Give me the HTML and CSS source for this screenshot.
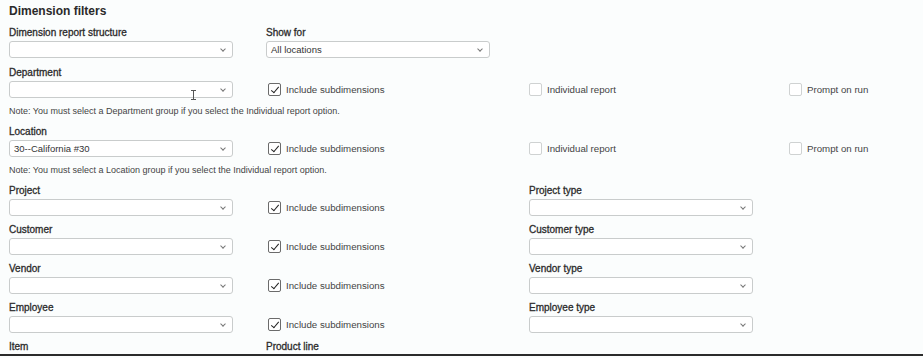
FILE: index.html
```html
<!DOCTYPE html>
<html lang="en">
<head>
    <meta charset="UTF-8">
    <meta name="viewport" content="width=device-width, initial-scale=1.0">
    <title>Dimension filters</title>
    <link rel="stylesheet" href="styles.css">
</head>
<body>
<div class="page">
    <h2 class="title">Dimension filters</h2>

    <div class="row first">
        <label class="lbl c1">Dimension report structure</label>
        <label class="lbl c2">Show for</label>
        <div class="sel c1 r2"></div>
        <div class="sel c2 r2">All locations</div>
    </div>

    <div class="row">
        <label class="lbl c1">Department</label>
        <div class="sel c1 r2"><span class="ibeam"></span></div>
        <div class="chk c2 r2"><span class="box on"></span>Include subdimensions</div>
        <div class="chk c3 r2 flush"><span class="box"></span>Individual report</div>
        <div class="chk c4 r2 flush"><span class="box"></span>Prompt on run</div>
    </div>
    <p class="note">Note: You must select a Department group if you select the Individual report option.</p>

    <div class="row">
        <label class="lbl c1">Location</label>
        <div class="sel c1 r2">30--California #30</div>
        <div class="chk c2 r2"><span class="box on"></span>Include subdimensions</div>
        <div class="chk c3 r2 flush"><span class="box"></span>Individual report</div>
        <div class="chk c4 r2 flush"><span class="box"></span>Prompt on run</div>
    </div>
    <p class="note">Note: You must select a Location group if you select the Individual report option.</p>

    <div class="row">
        <label class="lbl c1">Project</label>
        <label class="lbl c3">Project type</label>
        <div class="sel c1 r2"></div>
        <div class="chk c2 r2"><span class="box on"></span>Include subdimensions</div>
        <div class="sel c3 r2"></div>
    </div>

    <div class="row">
        <label class="lbl c1">Customer</label>
        <label class="lbl c3">Customer type</label>
        <div class="sel c1 r2"></div>
        <div class="chk c2 r2"><span class="box on"></span>Include subdimensions</div>
        <div class="sel c3 r2"></div>
    </div>

    <div class="row">
        <label class="lbl c1">Vendor</label>
        <label class="lbl c3">Vendor type</label>
        <div class="sel c1 r2"></div>
        <div class="chk c2 r2"><span class="box on"></span>Include subdimensions</div>
        <div class="sel c3 r2"></div>
    </div>

    <div class="row">
        <label class="lbl c1">Employee</label>
        <label class="lbl c3">Employee type</label>
        <div class="sel c1 r2"></div>
        <div class="chk c2 r2"><span class="box on"></span>Include subdimensions</div>
        <div class="sel c3 r2"></div>
    </div>

    <div class="row">
        <label class="lbl c1">Item</label>
        <label class="lbl c2">Product line</label>
        <div class="sel c1 r2"></div>
        <div class="sel c2 r2"></div>
    </div>
</div>
</body>
</html>
```

FILE: styles.css
```css
body {
    margin: 0;
    background-color: #fbfdfd;
    font-family: "Liberation Sans", Arial, sans-serif;
    color: #333;
}
.page {
    height: 356px;
    overflow: hidden;
    padding: 3px 0 0 9px;
    box-sizing: border-box;
    border-bottom: 2px solid #2b2b2b;
}
.title {
    margin: 0 0 5px 0;
    font-size: 12px;
    line-height: 16px;
    font-weight: bold;
    color: #2a2a2a;
}
.row {
    display: grid;
    grid-template-columns: 257px 263px 260px 1fr;
    grid-template-rows: 17px 17px;
    margin-bottom: 5px;
}
.row.first {
    margin-bottom: 6px;
}
.lbl {
    grid-row: 1;
    padding-top: 1px;
    font-size: 10px;
    line-height: 16px;
    color: #2b2b2b;
    -webkit-text-stroke: 0.3px #2b2b2b;
}
.r2 { grid-row: 2; }
.c1 { grid-column: 1; }
.c2 { grid-column: 2; }
.c3 { grid-column: 3; }
.c4 { grid-column: 4; }
.sel {
    position: relative;
    width: 224px;
    height: 17px;
    box-sizing: border-box;
    border: 1px solid #c9cccc;
    border-radius: 3px;
    background-color: #fff;
    font-size: 9.5px;
    line-height: 15px;
    padding-left: 4px;
    color: #333;
}
.sel::after {
    content: "";
    position: absolute;
    right: 7px;
    top: 5px;
    width: 3px;
    height: 3px;
    border-right: 1px solid #777;
    border-bottom: 1px solid #777;
    transform: rotate(45deg);
}
.ibeam {
    position: absolute;
    left: 183px;
    top: 8px;
    width: 1px;
    height: 10px;
    background-color: #555;
}
.ibeam::before, .ibeam::after {
    content: "";
    position: absolute;
    left: -2px;
    width: 5px;
    height: 1px;
    background-color: #555;
}
.ibeam::before { top: 0; }
.ibeam::after { bottom: 0; }
.chk {
    display: flex;
    align-items: center;
    gap: 5px;
    padding-left: 2px;
    font-size: 9.7px;
    color: #444;
}
.chk.flush { padding-left: 0; }
.box {
    width: 13px;
    height: 13px;
    box-sizing: border-box;
    border: 1px solid #cfd2d2;
    border-radius: 2px;
    background-color: #fff;
    position: relative;
}
.box.on {
    border-color: #6b6b6b;
}
.box.on::after {
    content: "";
    position: absolute;
    left: 3.5px;
    top: 1px;
    width: 3px;
    height: 7px;
    border-right: 1.5px solid #222;
    border-bottom: 1.5px solid #222;
    transform: rotate(40deg);
}
.note {
    margin: 0 0 5px 0;
    padding-top: 1px;
    font-size: 9px;
    line-height: 14px;
    color: #444;
}
```
